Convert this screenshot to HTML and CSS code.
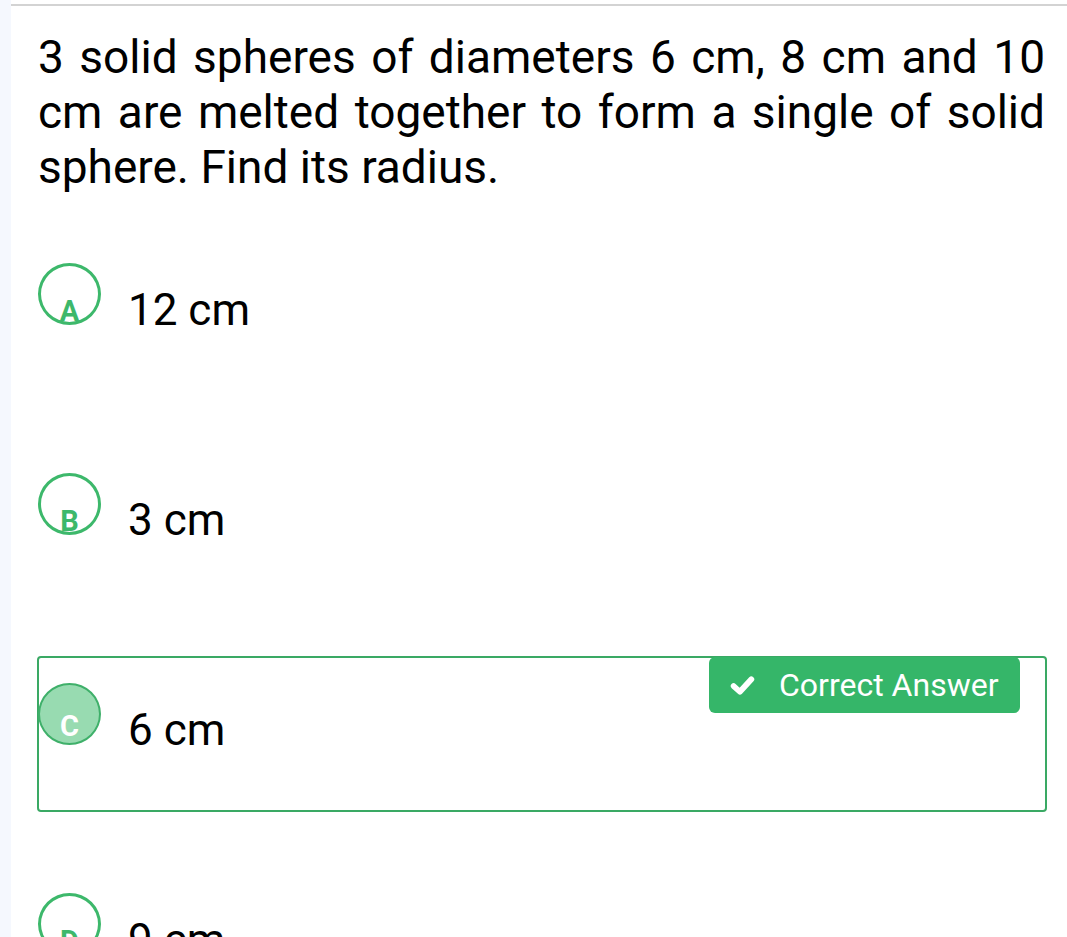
FILE: index.html
```html
<!DOCTYPE html>
<html>
<head>
<meta charset="utf-8">
<link rel="stylesheet" href="styles.css">
</head>
<body>
<div class="page">
  <div class="strip"></div>
  <main class="content">
    <p class="question">3 solid spheres of diameters 6 cm, 8 cm and 10 cm are melted together to form a single of solid sphere. Find its radius.</p>
    <div class="options">
      <div class="option">
        <span class="bubble"><span class="letter">A</span></span>
        <span class="answer">12 cm</span>
      </div>
      <div class="option">
        <span class="bubble"><span class="letter">B</span></span>
        <span class="answer">3 cm</span>
      </div>
      <div class="option correct">
        <span class="bubble filled"><span class="letter">C</span></span>
        <span class="answer">6 cm</span>
        <span class="badge">
          <svg class="check" viewBox="0 0 24 20"><polyline points="3.5,10.5 9.5,16 20.5,4" fill="none" stroke="#fff" stroke-width="5.5" stroke-linecap="round" stroke-linejoin="round"/></svg>
          <span class="badge-text">Correct Answer</span>
        </span>
      </div>
      <div class="option">
        <span class="bubble"><span class="letter">D</span></span>
        <span class="answer">9 cm</span>
      </div>
    </div>
  </main>
</div>
</body>
</html>
```

FILE: styles.css
```css
html, body {
  margin: 0;
  padding: 0;
  background: #ffffff;
  overflow: hidden;
}
body {
  font-family: Roboto, "Liberation Sans", sans-serif;
  color: #000;
}
.page {
  display: flex;
  min-height: 937px;
}
.strip {
  width: 11px;
  flex: none;
  background: #f5f8fe;
}
.content {
  flex: 1;
  margin-top: 4px;
  border-top: 2px solid #d3d3d3;
}
.question {
  margin: 0;
  padding: 24px 22px 0 27px;
  font-size: 46px;
  line-height: 55px;
  text-align: justify;
}
.options {
  margin-top: 41px;
  padding: 0 20px 0 26px;
}
.option {
  position: relative;
  display: flex;
  align-items: flex-start;
  height: 152px;
  margin-bottom: 54px;
  border: 2px solid transparent;
  border-radius: 4px;
}
.option.correct {
  border-color: #3aa964;
}
.bubble {
  flex: none;
  box-sizing: border-box;
  width: 63px;
  height: 62px;
  margin: 25px 0 0 -1px;
  border: 3px solid #3db86b;
  border-radius: 50%;
  display: flex;
  justify-content: center;
  align-items: flex-end;
  background: #fff;
}
.bubble.filled {
  background: #98dbb1;
  border-width: 2px;
  border-color: #3fb06a;
}
.letter {
  font-size: 29px;
  font-weight: 700;
  line-height: 28px;
  color: #3db86b;
  margin-bottom: -3px;
}
.bubble.filled .letter {
  color: #fff;
  margin-bottom: 3px;
}
.answer {
  margin: 50px 0 0 27px;
  font-size: 44px;
  line-height: 44px;
}
.badge {
  position: absolute;
  top: -1px;
  right: 25px;
  box-sizing: border-box;
  width: 311px;
  height: 56px;
  border-radius: 6px;
  background: #35b669;
  display: flex;
  align-items: center;
  padding-left: 21px;
  color: #fff;
}
.check {
  width: 25px;
  height: 21px;
  flex: none;
}
.badge-text {
  margin-left: 24px;
  font-size: 32px;
  line-height: 32px;
  color: #fff;
}
```
